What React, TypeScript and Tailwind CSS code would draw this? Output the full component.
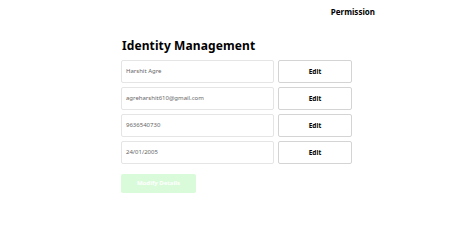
import React from "react";

const fields = ["Harshit Agre", "agreharshit610@gmail.com", "9636540730", "24/01/2005"];

export default function App() {
  return (
    <div
      className="w-[474px] h-[205px] bg-white text-black overflow-hidden"
      style={{ fontFamily: '"Noto Sans", "Liberation Sans", sans-serif' }}
    >
      {/* Header */}
      <div className="flex justify-end pr-[99px] pt-[6px] h-[20px]">
        <span className="text-[8px] font-bold leading-[12px]">Permission</span>
      </div>

      {/* Body */}
      <div className="pl-[121px] pt-[18px]">
        <h1 className="text-[12px] font-bold leading-[16px] pl-[1px] tracking-[0.1px]">Identity Management</h1>
        <div className="mt-[6px] flex flex-col gap-[4px]">
          {fields.map((f) => (
            <div key={f} className="flex gap-[4px]">
              <div className="w-[153px] h-[23px] border border-[#e5e5e5] rounded-[2px] flex items-center px-[4px]">
                <span className="text-[6px] text-[#666]">{f}</span>
              </div>
              <button className="w-[74px] h-[23px] border border-[#d4d4d4] rounded-[2px] bg-white flex items-center justify-center text-[6.5px] font-bold">
                Edit
              </button>
            </div>
          ))}
        </div>
        <button className="mt-[10px] w-[75px] h-[19px] rounded-[2px] bg-[#d9fbd9] text-white text-[6px] font-bold flex items-center justify-center">
          Modify Details
        </button>
      </div>
    </div>
  );
}
